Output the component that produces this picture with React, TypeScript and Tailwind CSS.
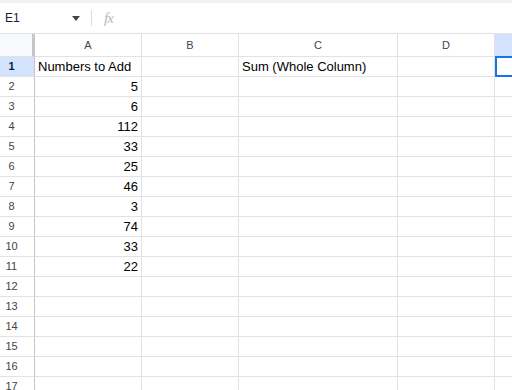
import React from "react"

const numbers: Record<number, string> = {
  2: "5",
  3: "6",
  4: "112",
  5: "33",
  6: "25",
  7: "46",
  8: "3",
  9: "74",
  10: "33",
  11: "22",
}

const cols = "grid grid-cols-[35px_107px_97px_159px_97px_1fr]"

function Cell({ children, className = "" }: { children?: React.ReactNode; className?: string }) {
  return (
    <div className={`border-r border-b border-[#e2e2e2] overflow-hidden whitespace-nowrap ${className}`}>
      {children}
    </div>
  )
}

export default function App() {
  const rows = Array.from({ length: 17 }, (_, i) => i + 1)

  return (
    <div className="w-[512px] h-[390px] overflow-hidden bg-white font-['Liberation_Sans',Arial,sans-serif] text-black">
      {/* formula bar */}
      <div className="h-[34px] flex items-center border-t-[3px] border-t-[#f1f1f1] border-b border-[#e2e2e2]">
        <div className="w-[91px] flex items-center justify-between pl-[5px] pr-[11px] text-[12px] text-[#202124]">
          <span>E1</span>
          <svg width="8" height="5" viewBox="0 0 8 5">
            <path d="M0 0h8L4 5z" fill="#444" />
          </svg>
        </div>
        <div className="w-px h-[16px] bg-[#dadce0]" />
        <span className="ml-[12px] text-[15px] italic tracking-[-1px] text-[#b8b8b8] font-['Liberation_Serif',serif]">fx</span>
      </div>

      {/* column headers */}
      <div className={`${cols} h-[23px] text-[11px] text-[#444]`}>
        <div className="bg-[#f8f9fa] border-r-[3px] border-r-[#c4c7c5] border-b border-[#e2e2e2]" />
        <Cell className="flex items-center justify-center">A</Cell>
        <Cell className="flex items-center justify-center">B</Cell>
        <Cell className="flex items-center justify-center">C</Cell>
        <Cell className="flex items-center justify-center">D</Cell>
        <Cell className="bg-[#d3e3fd] border-r-0" />
      </div>

      {/* rows */}
      {rows.map((r) => (
        <div key={r} className={`${cols} h-[20px] text-[13px]`}>
          <Cell
            className={`flex items-center justify-center pr-[11px] text-[11px] border-r-[#c4c7c5] ${
              r === 1 ? "bg-[#d3e3fd] text-[#041e49] font-bold" : "text-[#444]"
            }`}
          >
            {r}
          </Cell>
          <Cell className={`flex items-center px-[3px] ${r === 1 ? "justify-start" : "justify-end"}`}>
            {r === 1 ? "Numbers to Add" : numbers[r] ?? ""}
          </Cell>
          <Cell />
          <Cell className="flex items-center pl-[3px]">{r === 1 ? "Sum (Whole Column)" : ""}</Cell>
          <Cell />
          {r === 1 ? (
            <div className="border-2 border-[#1a73e8] border-r-0 -mt-px" />
          ) : (
            <Cell className="border-r-0" />
          )}
        </div>
      ))}
    </div>
  )
}
